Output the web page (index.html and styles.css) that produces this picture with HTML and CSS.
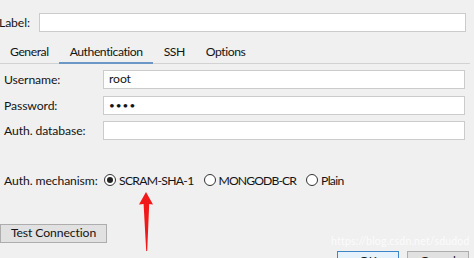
FILE: index.html
```html
<!DOCTYPE html>
<html>
<head>
<meta charset="utf-8">
<link rel="stylesheet" href="styles.css">
</head>
<body>
<div class="dialog">
  <div class="label-row">
    <span class="top-label">Label:</span>
    <div class="field label-field"></div>
  </div>
  <div class="tabs">
    <span class="tab">General</span>
    <span class="tab active">Authentication</span>
    <span class="tab">SSH</span>
    <span class="tab">Options</span>
  </div>
  <div class="form">
    <div class="row"><span class="flabel">Username:</span><div class="field">root</div></div>
    <div class="row"><span class="flabel">Password:</span><div class="field dots">••••</div></div>
    <div class="row"><span class="flabel">Auth. database:</span><div class="field"></div></div>
  </div>
  <div class="mech">
    <span class="mlabel">Auth. mechanism:</span>
    <span class="radio checked"></span><span class="rtext">SCRAM-SHA-1</span>
    <span class="radio"></span><span class="rtext mongo">MONGODB-CR</span>
    <span class="radio"></span><span class="rtext">Plain</span>
  </div>
  <div class="test-row">
    <div class="btn test">Test Connection</div>
  </div>
  <div class="actions">
    <div class="btn ok">OK</div>
    <div class="btn cancel">Cancel</div>
  </div>
  <div class="watermark">https://blog.csdn.net/sdudod</div>
  <svg class="arrow" width="20" height="64" viewBox="0 0 20 64">
    <path d="M9 0 L16 12.5 L12.2 12 L10.2 59 L9.2 59 L6.6 12 L2 12.5 Z" fill="#f01818"/>
  </svg>
</div>
</body>
</html>
```
FILE: styles.css
```css
html, body {
  margin: 0;
  padding: 0;
  background: #f0f0f0;
}
.dialog {
  position: relative;
  width: 474px;
  height: 258px;
  overflow: hidden;
  font-family: Lato, "Noto Sans", sans-serif;
  font-size: 12.2px;
  color: #141414;
  background: #f0f0f0;
  white-space: nowrap;
  letter-spacing: -0.1px;
}
.label-row {
  display: flex;
  align-items: center;
  padding-top: 13px;
  height: 19px;
}
.top-label {
  width: 40px;
  margin-left: -1px;
}
.field {
  box-sizing: border-box;
  height: 19px;
  background: #fff;
  border: 1px solid #cbcbcb;
  padding-left: 5px;
  line-height: 16px;
}
.label-field {
  width: 427px;
}
.tabs {
  display: flex;
  height: 31px;
  border-bottom: 1px solid #d2d2d2;
  width: 470px;
  padding-left: 0;
}
.tab {
  box-sizing: border-box;
  padding: 11px 10.5px 0 10.5px;
  height: 31px;
  line-height: 18px;
  letter-spacing: -0.45px;
}
.tab:first-child {
  padding-left: 10px;
}
.tab.active {
  border-bottom: 2px solid #6a97c6;
  margin-bottom: -1px;
  height: 32px;
}
.form {
  display: flex;
  flex-direction: column;
  gap: 6.5px;
  padding-top: 6px;
}
.row {
  display: flex;
  align-items: center;
}
.flabel {
  width: 99px;
  padding-left: 4px;
}
.row .field {
  width: 362px;
}
.dots {
  letter-spacing: 1px;
  font-size: 10px;
}
.mech {
  display: flex;
  align-items: center;
  margin-top: 33px;
  height: 14px;
}
.mlabel {
  width: 100px;
  padding-left: 4px;
}
.radio {
  box-sizing: border-box;
  width: 12px;
  height: 12px;
  border: 1px solid #333;
  border-radius: 50%;
  background: #fff;
  margin-right: 3px;
  display: flex;
  align-items: center;
  justify-content: center;
}
.radio.checked::after {
  content: "";
  width: 6px;
  height: 6px;
  border-radius: 50%;
  background: #222;
}
.rtext {
  margin-right: 10px;
  letter-spacing: -0.7px;
}
.rtext.mongo {
  letter-spacing: -0.9px;
}
.test-row {
  margin-top: 37px;
}
.btn {
  box-sizing: border-box;
  height: 19px;
  border: 1px solid #adadad;
  background: #e1e1e1;
  text-align: center;
  line-height: 16px;
}
.test {
  width: 107px;
}
.actions {
  display: flex;
  justify-content: flex-end;
  gap: 8px;
  margin-top: 8px;
  padding-right: 5px;
}
.ok {
  width: 62px;
  height: 22px;
  border-color: #3c86c8;
  background: #e5f1fb;
  padding-top: 1px;
}
.cancel {
  width: 62px;
  height: 22px;
  padding-top: 1px;
}
.watermark {
  position: absolute;
  left: 331px;
  top: 235px;
  font-size: 10.5px;
  color: rgba(255,255,255,0.8);
  letter-spacing: 0.2px;
}
.arrow {
  position: absolute;
  left: 137px;
  top: 192px;
}
```
